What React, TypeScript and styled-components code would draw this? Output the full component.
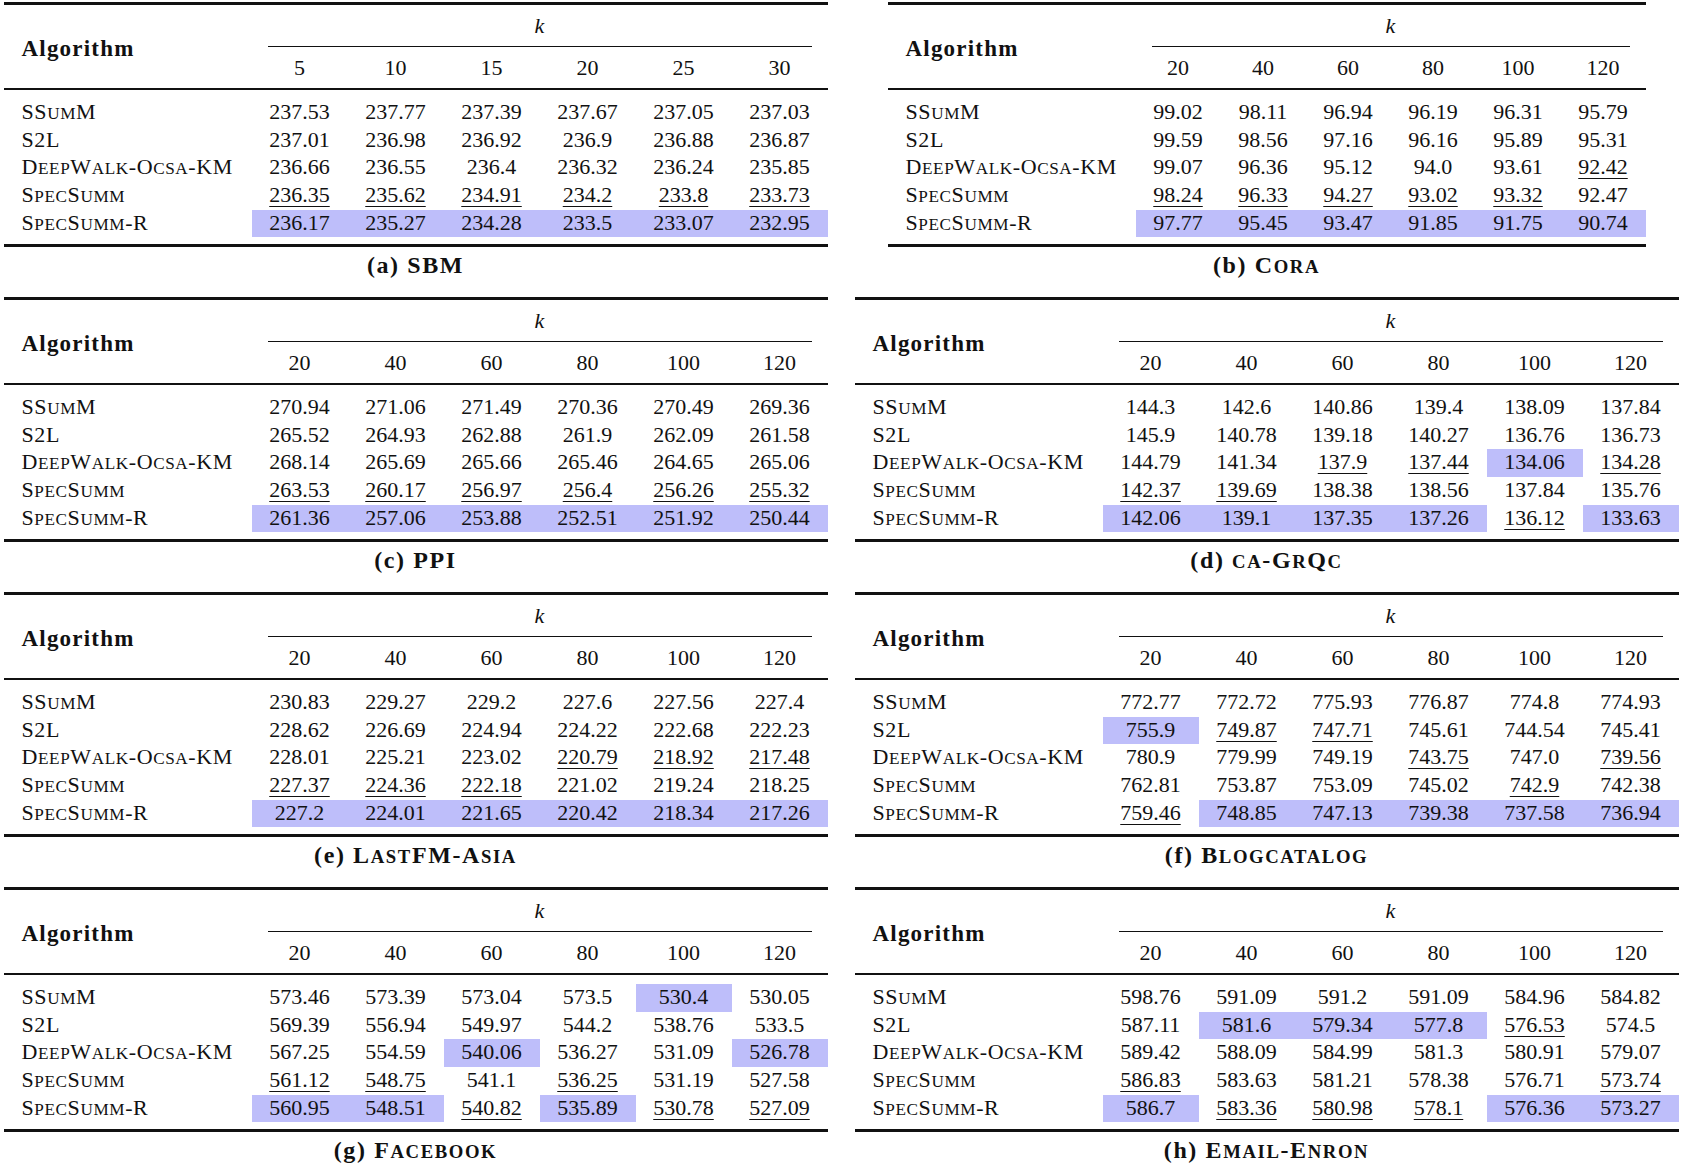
import React from "react";
import styled, { createGlobalStyle } from "styled-components";

const INK = "#111111";
const HL = "rgb(190, 190, 250)";

const GlobalStyle = createGlobalStyle`
  html, body { margin: 0; padding: 0; background: #ffffff; }
  body {
    font-family: "Liberation Serif", "Times New Roman", serif;
    color: ${INK};
  }
`;

const Page = styled.main`
  display: grid;
  grid-template-columns: 831px 831px;
  column-gap: 20px;
  width: 1682px;
`;

const Panel = styled.section`
  height: 295px;
  display: flex;
  flex-direction: column;
  align-items: center;
`;

const Table = styled.div`
  margin-top: 2px;
  display: flex;
  flex-direction: column;
`;

const HeavyRule = styled.div<{ $gap?: number }>`
  height: 3px;
  background: ${INK};
  margin-top: ${(p) => p.$gap ?? 0}px;
`;

const MidRule = styled.div`
  height: 2px;
  background: ${INK};
`;

const Head = styled.div<{ $col: number }>`
  display: grid;
  grid-template-columns: 248px ${(p) => p.$col * 6}px;
  height: 83px;
`;

const AlgHead = styled.div`
  padding: 31px 0 0 18px;
  font-size: 23px;
  font-weight: 700;
  line-height: 26px;
  letter-spacing: 1.2px;
`;

const KGroup = styled.div`
  display: flex;
  flex-direction: column;
`;

const KLabel = styled.div`
  height: 41px;
  line-height: 41px;
  text-align: center;
  font-style: italic;
  font-size: 22px;
`;

const CMidRule = styled.div`
  height: 1px;
  margin: 0 16px;
  background: ${INK};
`;

const KValues = styled.div<{ $col: number }>`
  display: grid;
  grid-template-columns: repeat(6, ${(p) => p.$col}px);
  height: 41px;
  box-sizing: border-box;
  padding-top: 1px;
  line-height: 40px;
  font-size: 22px;
  text-align: center;
`;

const Body = styled.div<{ $col: number }>`
  display: grid;
  grid-template-columns: 248px repeat(6, ${(p) => p.$col}px);
  grid-auto-rows: 27.7px;
  padding-top: 9px;
  font-size: 22px;
  line-height: 25px;
`;

const NameCell = styled.div`
  padding-left: 18px;
  letter-spacing: 0.6px;
  white-space: nowrap;
`;

const NumCell = styled.div<{ $hl?: boolean }>`
  text-align: center;
  background: ${(p) => (p.$hl ? HL : "transparent")};
`;

const Num = styled.span<{ $ul?: boolean }>`
  text-decoration: ${(p) => (p.$ul ? "underline" : "none")};
  text-decoration-thickness: 1.3px;
  text-underline-offset: 4px;
`;

const Sc = styled.span`
  font-size: 0.78em;
  text-transform: uppercase;
`;

const Caption = styled.div`
  margin-top: 3px;
  font-size: 24px;
  font-weight: 700;
  line-height: 30px;
  letter-spacing: 1.6px;
  text-align: center;
  white-space: nowrap;
`;

const SmallCaps = ({ text }: { text: string }) => {
  const parts = text.split(/([a-z]+)/);
  return (
    <>
      {parts.map((p, i) =>
        /^[a-z]+$/.test(p) ? <Sc key={i}>{p}</Sc> : <React.Fragment key={i}>{p}</React.Fragment>
      )}
    </>
  );
};

const ALGOS = ["SSumM", "S2L", "DeepWalk-Ocsa-KM", "SpecSumm", "SpecSumm-R"];
const K_STD = [20, 40, 60, 80, 100, 120];

type TableData = {
  label: string;
  name: string;
  col: number;
  ks: number[];
  rows: string[][];
};

const TABLES: TableData[] = [
  {
    label: "a",
    name: "SBM",
    col: 96,
    ks: [5, 10, 15, 20, 25, 30],
    rows: [
      ["237.53", "237.77", "237.39", "237.67", "237.05", "237.03"],
      ["237.01", "236.98", "236.92", "236.9", "236.88", "236.87"],
      ["236.66", "236.55", "236.4", "236.32", "236.24", "235.85"],
      ["236.35_", "235.62_", "234.91_", "234.2_", "233.8_", "233.73_"],
      ["236.17*", "235.27*", "234.28*", "233.5*", "233.07*", "232.95*"],
    ],
  },
  {
    label: "b",
    name: "Cora",
    col: 85,
    ks: K_STD,
    rows: [
      ["99.02", "98.11", "96.94", "96.19", "96.31", "95.79"],
      ["99.59", "98.56", "97.16", "96.16", "95.89", "95.31"],
      ["99.07", "96.36", "95.12", "94.0", "93.61", "92.42_"],
      ["98.24_", "96.33_", "94.27_", "93.02_", "93.32_", "92.47"],
      ["97.77*", "95.45*", "93.47*", "91.85*", "91.75*", "90.74*"],
    ],
  },
  {
    label: "c",
    name: "PPI",
    col: 96,
    ks: K_STD,
    rows: [
      ["270.94", "271.06", "271.49", "270.36", "270.49", "269.36"],
      ["265.52", "264.93", "262.88", "261.9", "262.09", "261.58"],
      ["268.14", "265.69", "265.66", "265.46", "264.65", "265.06"],
      ["263.53_", "260.17_", "256.97_", "256.4_", "256.26_", "255.32_"],
      ["261.36*", "257.06*", "253.88*", "252.51*", "251.92*", "250.44*"],
    ],
  },
  {
    label: "d",
    name: "ca-GrQc",
    col: 96,
    ks: K_STD,
    rows: [
      ["144.3", "142.6", "140.86", "139.4", "138.09", "137.84"],
      ["145.9", "140.78", "139.18", "140.27", "136.76", "136.73"],
      ["144.79", "141.34", "137.9_", "137.44_", "134.06*", "134.28_"],
      ["142.37_", "139.69_", "138.38", "138.56", "137.84", "135.76"],
      ["142.06*", "139.1*", "137.35*", "137.26*", "136.12_", "133.63*"],
    ],
  },
  {
    label: "e",
    name: "LastFM-Asia",
    col: 96,
    ks: K_STD,
    rows: [
      ["230.83", "229.27", "229.2", "227.6", "227.56", "227.4"],
      ["228.62", "226.69", "224.94", "224.22", "222.68", "222.23"],
      ["228.01", "225.21", "223.02", "220.79_", "218.92_", "217.48_"],
      ["227.37_", "224.36_", "222.18_", "221.02", "219.24", "218.25"],
      ["227.2*", "224.01*", "221.65*", "220.42*", "218.34*", "217.26*"],
    ],
  },
  {
    label: "f",
    name: "Blogcatalog",
    col: 96,
    ks: K_STD,
    rows: [
      ["772.77", "772.72", "775.93", "776.87", "774.8", "774.93"],
      ["755.9*", "749.87_", "747.71_", "745.61", "744.54", "745.41"],
      ["780.9", "779.99", "749.19", "743.75_", "747.0", "739.56_"],
      ["762.81", "753.87", "753.09", "745.02", "742.9_", "742.38"],
      ["759.46_", "748.85*", "747.13*", "739.38*", "737.58*", "736.94*"],
    ],
  },
  {
    label: "g",
    name: "Facebook",
    col: 96,
    ks: K_STD,
    rows: [
      ["573.46", "573.39", "573.04", "573.5", "530.4*", "530.05"],
      ["569.39", "556.94", "549.97", "544.2", "538.76", "533.5"],
      ["567.25", "554.59", "540.06*", "536.27", "531.09", "526.78*"],
      ["561.12_", "548.75_", "541.1", "536.25_", "531.19", "527.58"],
      ["560.95*", "548.51*", "540.82_", "535.89*", "530.78_", "527.09_"],
    ],
  },
  {
    label: "h",
    name: "Email-Enron",
    col: 96,
    ks: K_STD,
    rows: [
      ["598.76", "591.09", "591.2", "591.09", "584.96", "584.82"],
      ["587.11", "581.6*", "579.34*", "577.8*", "576.53_", "574.5"],
      ["589.42", "588.09", "584.99", "581.3", "580.91", "579.07"],
      ["586.83_", "583.63", "581.21", "578.38", "576.71", "573.74_"],
      ["586.7*", "583.36_", "580.98_", "578.1_", "576.36*", "573.27*"],
    ],
  },
];

const ResultTable = ({ data }: { data: TableData }) => (
  <Panel>
    <Table>
      <HeavyRule />
      <Head $col={data.col}>
        <AlgHead>Algorithm</AlgHead>
        <KGroup>
          <KLabel>k</KLabel>
          <CMidRule />
          <KValues $col={data.col}>
            {data.ks.map((k) => (
              <span key={k}>{k}</span>
            ))}
          </KValues>
        </KGroup>
      </Head>
      <MidRule />
      <Body $col={data.col}>
        {data.rows.map((row, ri) => (
          <React.Fragment key={ri}>
            <NameCell>
              <SmallCaps text={ALGOS[ri]} />
            </NameCell>
            {row.map((cell, ci) => {
              const hl = cell.endsWith("*");
              const ul = cell.endsWith("_");
              const value = hl || ul ? cell.slice(0, -1) : cell;
              return (
                <NumCell key={ci} $hl={hl}>
                  <Num $ul={ul}>{value}</Num>
                </NumCell>
              );
            })}
          </React.Fragment>
        ))}
      </Body>
      <HeavyRule $gap={6.5} />
    </Table>
    <Caption>
      ({data.label}) <SmallCaps text={data.name} />
    </Caption>
  </Panel>
);

export default function App() {
  return (
    <>
      <GlobalStyle />
      <Page>
        {TABLES.map((t) => (
          <ResultTable key={t.label} data={t} />
        ))}
      </Page>
    </>
  );
}
